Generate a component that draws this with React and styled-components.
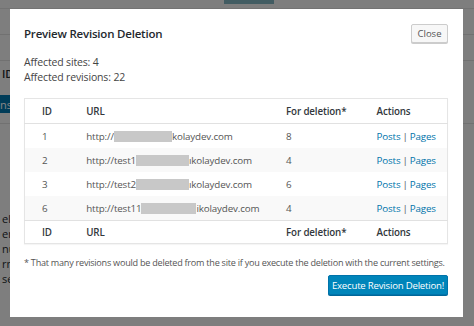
import React from 'react'
import styled, { createGlobalStyle } from 'styled-components'

const GlobalStyle = createGlobalStyle`
  html, body {
    margin: 0;
    padding: 0;
    width: 474px;
    height: 326px;
    overflow: hidden;
    background: #f1f1f1;
    font-family: 'Open Sans', 'Noto Sans', sans-serif;
  }
`

const Page = styled.div`
  position: relative;
  width: 474px;
  height: 326px;
  display: flex;
  flex-direction: column;
  background: #f1f1f1;
  color: #23282d;
  font-size: 11px;
`

const TopStrip = styled.div`
  height: 4px;
  display: flex;
  align-items: flex-end;
  padding-left: 224px;
  padding-bottom: 4px;
  border-bottom: 1px solid #ddd;
`

const TealButton = styled.div`
  width: 50px;
  height: 4px;
  background: #7fb0bd;
`

const SideRow = styled.div`
  height: ${(p) => p.h}px;
  display: flex;
  align-items: center;
  border-bottom: ${(p) => (p.line ? '1px solid #d8d8d8' : 'none')};
  padding-left: 2px;
  font-weight: ${(p) => (p.bold ? 600 : 400)};
`

const BlueButton = styled.div`
  width: 40px;
  height: 18px;
  background: #0073aa;
  color: #fff;
  display: flex;
  align-items: center;
  margin-left: -2px;
`

const Overlay = styled.div`
  position: fixed;
  inset: 0;
  background: rgba(0, 0, 0, 0.48);
`

const Modal = styled.div`
  position: fixed;
  left: 10px;
  top: 9px;
  width: 453px;
  height: 308px;
  box-sizing: border-box;
  background: #fff;
  padding: 15px 15px 0 14px;
  display: flex;
  flex-direction: column;
  color: #444;
  font-size: 10.5px;
  letter-spacing: -0.15px;
`

const Header = styled.div`
  display: flex;
  align-items: center;
  justify-content: space-between;
  height: 19px;
`

const Title = styled.h2`
  margin: 0;
  font-size: 11.5px;
  font-weight: 600;
  letter-spacing: -0.2px;
  color: #23282d;
`

const CloseButton = styled.button`
  height: 19px;
  width: 37px;
  padding: 0;
  font-family: inherit;
  font-size: 9.5px;
  color: #555;
  background: #f7f7f7;
  border: 1px solid #ccc;
  border-radius: 2px;
  box-shadow: 0 1px 0 #ccc;
`

const Stats = styled.div`
  margin-top: 12px;
  line-height: 15px;
  color: #444;
`

const Table = styled.table`
  margin-top: 13px;
  width: 424px;
  border-collapse: collapse;
  border: 1px solid #e5e5e5;
  box-shadow: 0 1px 1px rgba(0, 0, 0, 0.04);
  font-size: 9.8px;
  letter-spacing: -0.15px;
`

const HeadCell = styled.th`
  text-align: left;
  font-weight: 600;
  color: #32373c;
  height: ${(p) => p.h || 25}px;
  padding: 0 0 0 ${(p) => p.pl || 10}px;
  width: ${(p) => p.w}px;
  border-bottom: ${(p) => (p.top ? '1px solid #e1e1e1' : 'none')};
  border-top: ${(p) => (p.bottom ? '1px solid #e1e1e1' : 'none')};
  box-sizing: border-box;
`

const Row = styled.tr`
  background: ${(p) => (p.alt ? '#f9f9f9' : '#fff')};
`

const Cell = styled.td`
  height: 24px;
  padding: 0 0 0 ${(p) => p.pl || 10}px;
  color: #555;
  white-space: nowrap;
`

const Redacted = styled.span`
  display: inline-block;
  vertical-align: middle;
  width: ${(p) => p.w}px;
  height: 11px;
  background: #c8c8c8;
`

const Link = styled.a`
  color: #0073aa;
  text-decoration: none;
`

const Sep = styled.span`
  color: #555;
  margin: 0 2px;
`

const Note = styled.p`
  margin: 12px 0 0;
  font-size: 9.1px;
  letter-spacing: -0.25px;
  white-space: nowrap;
  color: #555;
`

const Footer = styled.div`
  display: flex;
  justify-content: flex-end;
  margin-top: 6px;
`

const PrimaryButton = styled.button`
  width: 120px;
  height: 20px;
  padding: 0;
  font-family: inherit;
  font-size: 9.6px;
  letter-spacing: -0.2px;
  white-space: nowrap;
  color: #fff;
  background: #0085ba;
  border: 1px solid #0073aa;
  border-radius: 2px;
  box-shadow: 0 1px 0 #006799;
`

const rows = [
  { id: 1, pre: 'http://', w: 58, post: 'kolaydev.com', count: 8 },
  { id: 2, pre: 'http://test1', w: 53, post: 'ıkolaydev.com', count: 4 },
  { id: 3, pre: 'http://test2', w: 53, post: 'ıkolaydev.com', count: 6 },
  { id: 6, pre: 'http://test11', w: 55, post: 'ikolaydev.com', count: 4 },
]

const Columns = ({ top }) => (
  <tr>
    <HeadCell w={52} pl={17} top={top} bottom={!top} h={top ? 25 : 23}>ID</HeadCell>
    <HeadCell w={200} top={top} bottom={!top} h={top ? 25 : 23}>URL</HeadCell>
    <HeadCell w={91} top={top} bottom={!top} h={top ? 25 : 23}>For deletion*</HeadCell>
    <HeadCell w={81} top={top} bottom={!top} h={top ? 25 : 23}>Actions</HeadCell>
  </tr>
)

export default function App() {
  return (
    <>
      <GlobalStyle />
      <Page>
        <TopStrip>
          <TealButton />
        </TopStrip>
        <SideRow h={25} line />
        <SideRow h={25} line />
        <SideRow h={24} bold>ID</SideRow>
        <SideRow h={10} />
        <SideRow h={18}>
          <BlueButton>ns</BlueButton>
        </SideRow>
        <SideRow h={10} line />
        <SideRow h={87} />
        <SideRow h={15}>ele</SideRow>
        <SideRow h={15}>em</SideRow>
        <SideRow h={15}>nu</SideRow>
        <SideRow h={15}>rm</SideRow>
        <SideRow h={15}>se</SideRow>
        <Overlay />
        <Modal>
          <Header>
            <Title>Preview Revision Deletion</Title>
            <CloseButton>Close</CloseButton>
          </Header>
          <Stats>
            Affected sites: 4
            <br />
            Affected revisions: 22
          </Stats>
          <Table>
            <thead>
              <Columns top />
            </thead>
            <tbody>
              {rows.map((r, i) => (
                <Row key={r.id} alt={i % 2 === 1}>
                  <Cell pl={17}>{r.id}</Cell>
                  <Cell>
                    {r.pre}
                    <Redacted w={r.w} />
                    {r.post}
                  </Cell>
                  <Cell>{r.count}</Cell>
                  <Cell>
                    <Link href="#">Posts</Link>
                    <Sep>|</Sep>
                    <Link href="#">Pages</Link>
                  </Cell>
                </Row>
              ))}
            </tbody>
            <tfoot>
              <Columns />
            </tfoot>
          </Table>
          <Note>
            * That many revisions would be deleted from the site if you execute the deletion with the current settings.
          </Note>
          <Footer>
            <PrimaryButton>Execute Revision Deletion!</PrimaryButton>
          </Footer>
        </Modal>
      </Page>
    </>
  )
}
